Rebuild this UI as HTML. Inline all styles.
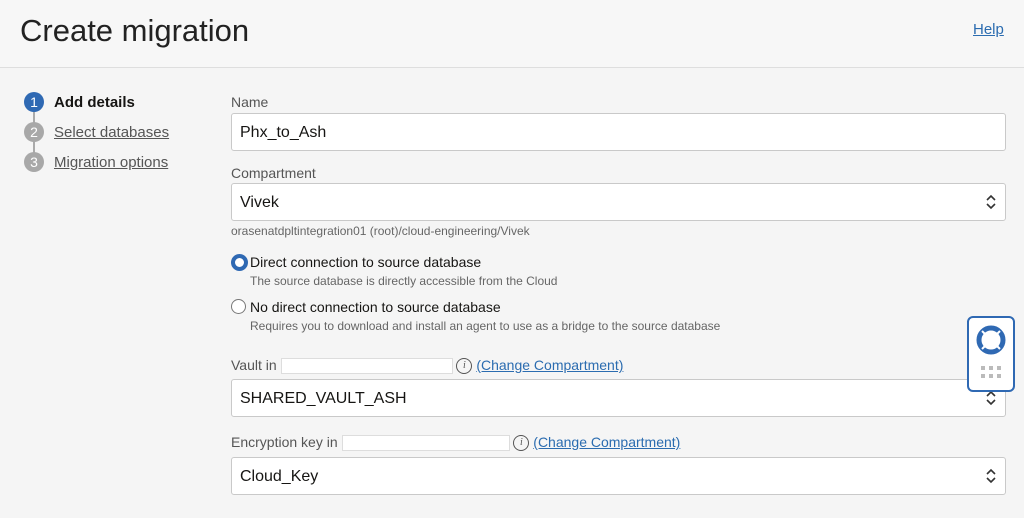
<!DOCTYPE html>
<html><head><style>
body{margin:0;width:1024px;height:518px;background:#f5f5f5;font-family:"Liberation Sans",sans-serif;position:relative;overflow:hidden;color:#161513}
.a{position:absolute;white-space:nowrap}
.hdr{position:absolute;left:0;top:0;width:1024px;height:67px;background:#f7f7f7;border-bottom:1px solid #dedede}
.inp{position:absolute;left:231px;height:36px;background:#fff;border:1px solid #c9c9c9;border-radius:3px;font-size:16px;line-height:38px;padding-left:8px;box-sizing:content-box;width:765px}
.lbl{font-size:14px;color:#555}
.sm{font-size:12px;color:#666}
.ar{position:absolute;right:8px;top:9px}
a{color:#2b6cb0;text-decoration:underline}
.blank{display:inline-block;border:1px solid #ddd;background:#fff;height:14px;vertical-align:middle}
.info{display:inline-block;width:14px;height:14px;border:1px solid #555;border-radius:50%;font-size:10px;font-style:italic;text-align:center;line-height:14px;vertical-align:middle;font-family:"Liberation Serif",serif}
.step{position:absolute;width:20px;height:20px;border-radius:50%;color:#fff;font-size:14px;text-align:center;line-height:20px;left:24px}
</style></head><body>
<div class="hdr"></div>
<div class="a" style="left:20px;top:13px;font-size:31px;color:#222">Create migration</div>
<div class="a" style="left:973px;top:21px;font-size:15px"><a>Help</a></div>
<div style="position:absolute;left:33px;top:110px;width:2px;height:50px;background:#aaa"></div>
<div class="step" style="top:92px;background:#2f69b3">1</div>
<div class="step" style="top:122px;background:#a8a8a8">2</div>
<div class="step" style="top:152px;background:#a8a8a8">3</div>
<div class="a" style="left:54px;top:94px;font-size:15px;font-weight:bold">Add details</div>
<div class="a" style="left:54px;top:124px;font-size:15px;color:#555;text-decoration:underline">Select databases</div>
<div class="a" style="left:54px;top:154px;font-size:15px;color:#555;text-decoration:underline">Migration options</div>

<div class="a lbl" style="left:231px;top:94px">Name</div>
<div class="inp" style="top:113px">Phx_to_Ash</div>
<div class="a lbl" style="left:231px;top:165px">Compartment</div>
<div class="inp" style="top:183px">Vivek<svg class="ar" width="12" height="18" viewBox="0 0 12 18"><path d="M2 7l4-4 4 4M2 11l4 4 4-4" fill="none" stroke="#333" stroke-width="1.6"/></svg></div>
<div class="a sm" style="left:231px;top:224px">orasenatdpltintegration01 (root)/cloud-engineering/Vivek</div>

<div style="position:absolute;left:231px;top:254px;width:9px;height:9px;border-radius:50%;border:4px solid #2f69b3;background:#fff"></div>
<div class="a" style="left:250px;top:254px;font-size:14px">Direct connection to source database</div>
<div class="a sm" style="left:250px;top:274px">The source database is directly accessible from the Cloud</div>
<div style="position:absolute;left:231px;top:299px;width:13px;height:13px;border-radius:50%;border:1px solid #777;background:#fff"></div>
<div class="a" style="left:250px;top:299px;font-size:14px">No direct connection to source database</div>
<div class="a sm" style="left:250px;top:319px">Requires you to download and install an agent to use as a bridge to the source database</div>

<div class="a lbl" style="left:231px;top:357px">Vault in <span class="blank" style="width:170px"></span> <span class="info">i</span> <a>(Change Compartment)</a></div>
<div class="inp" style="top:379px">SHARED_VAULT_ASH<svg class="ar" width="12" height="18" viewBox="0 0 12 18"><path d="M2 7l4-4 4 4M2 11l4 4 4-4" fill="none" stroke="#333" stroke-width="1.6"/></svg></div>
<div class="a lbl" style="left:231px;top:434px">Encryption key in <span class="blank" style="width:166px"></span> <span class="info">i</span> <a>(Change Compartment)</a></div>
<div class="inp" style="top:457px">Cloud_Key<svg class="ar" width="12" height="18" viewBox="0 0 12 18"><path d="M2 7l4-4 4 4M2 11l4 4 4-4" fill="none" stroke="#333" stroke-width="1.6"/></svg></div>

<div style="position:absolute;left:967px;top:316px;width:44px;height:72px;border:2px solid #2f69b3;border-radius:6px;background:#fff">
<svg width="44" height="72" viewBox="0 0 44 72"><circle cx="22" cy="22" r="12" fill="none" stroke="#2f69b3" stroke-width="5"/><circle cx="22" cy="22" r="6" fill="#fff"/>
<g stroke="#fff" stroke-width="2"><path d="M13 13l4 4M31 13l-4 4M13 31l4-4M31 31l-4-4"/></g>
<g fill="#bbb"><rect x="12" y="48" width="4" height="4"/><rect x="20" y="48" width="4" height="4"/><rect x="28" y="48" width="4" height="4"/><rect x="12" y="56" width="4" height="4"/><rect x="20" y="56" width="4" height="4"/><rect x="28" y="56" width="4" height="4"/></g></svg>
</div>
</body></html>
